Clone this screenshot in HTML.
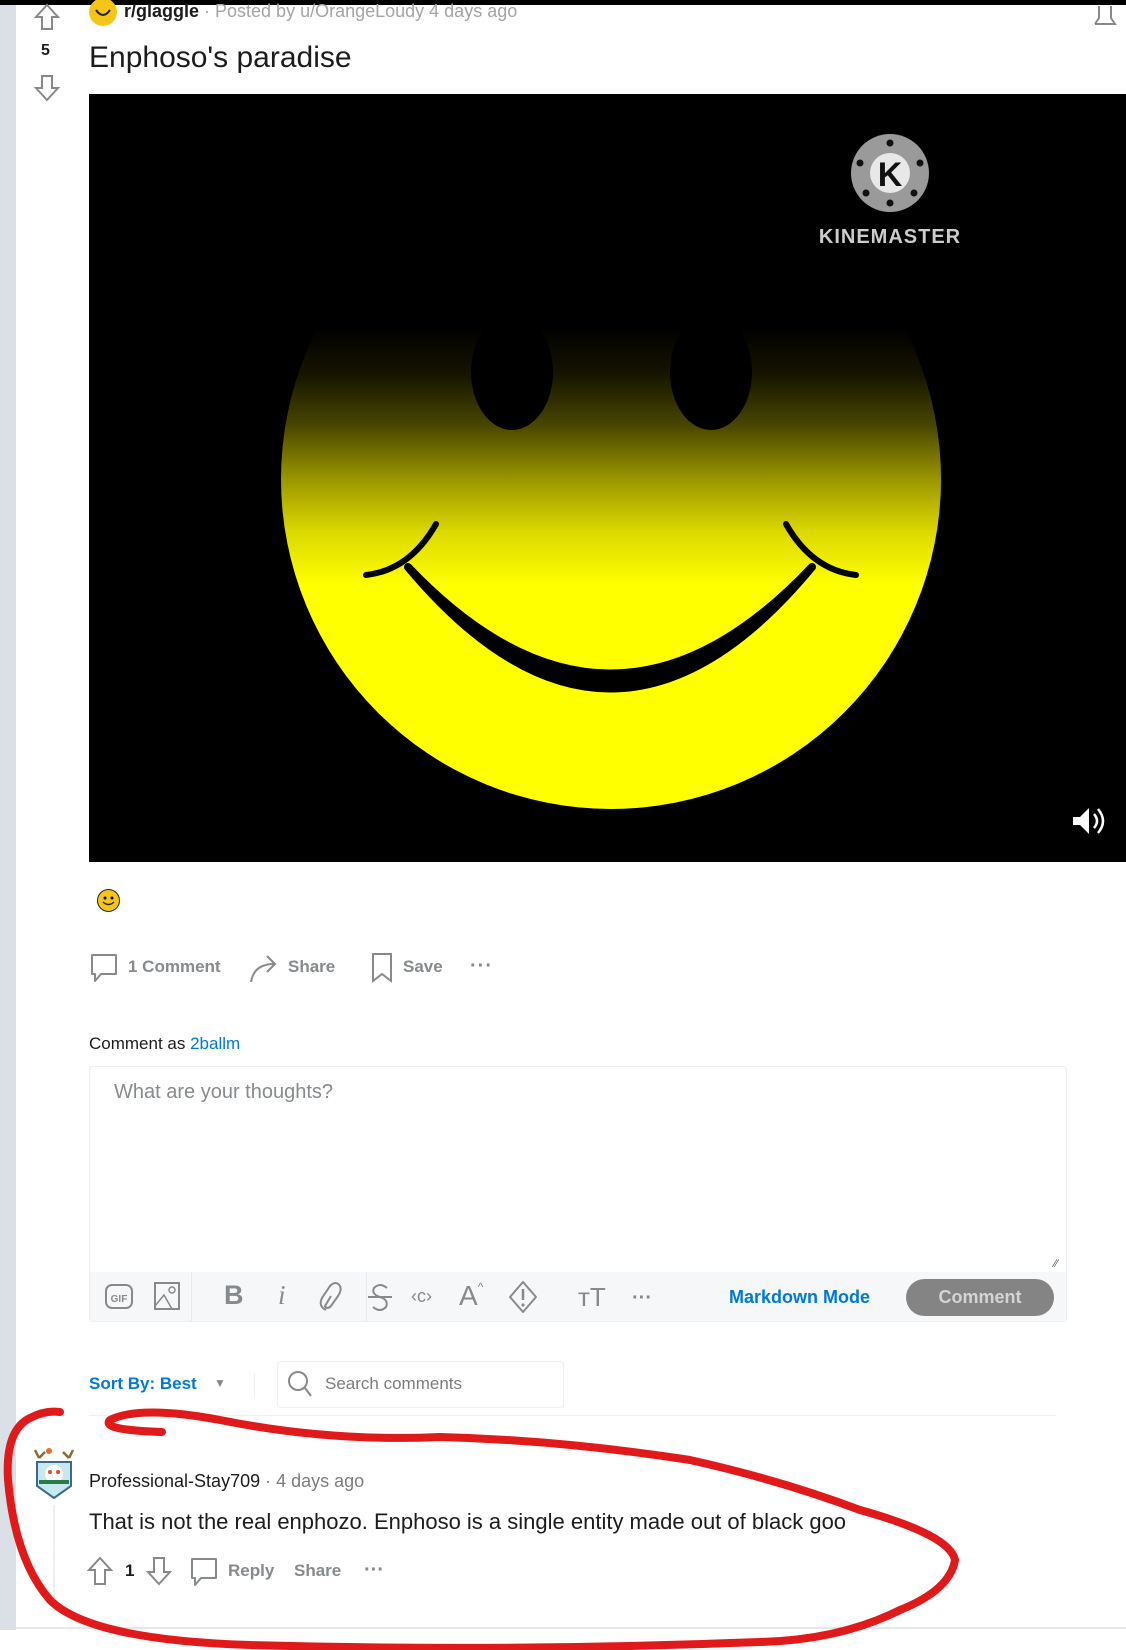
<!DOCTYPE html>
<html><head><meta charset="utf-8"><style>
*{margin:0;padding:0;box-sizing:border-box}
body{width:1126px;height:1650px;position:relative;background:#fff;font-family:"Liberation Sans",sans-serif;overflow:hidden}
.a{position:absolute;white-space:nowrap}
.g{color:#878a8c;font-weight:bold;font-size:17px}
</style></head><body>
<div class="a" style="left:0;top:0;width:1126px;height:5px;background:#000"></div>
<div class="a" style="left:0;top:5px;width:16px;height:1625px;background:#dae0e6"></div>
<div class="a" style="left:16px;top:1627px;width:1110px;height:2px;background:#e5e7ea"></div>

<svg class="a" style="left:32px;top:2px" width="30" height="30" viewBox="0 0 30 30"><path d="M15 3 L26 15 H20 V27 H10 V15 H4 Z" fill="none" stroke="#878a8c" stroke-width="2"/></svg>
<div class="a" style="left:41px;top:42px;font-size:16px;font-weight:bold;color:#1c1c1c">5</div>
<svg class="a" style="left:32px;top:73px" width="30" height="30" viewBox="0 0 30 30"><path d="M15 27 L26 15 H20 V3 H10 V15 H4 Z" fill="none" stroke="#878a8c" stroke-width="2"/></svg>

<div class="a" style="left:89px;top:-2px;width:28px;height:28px;border-radius:50%;background:#f5c518"></div>
<svg class="a" style="left:89px;top:-2px" width="28" height="28"><path d="M7 12 Q14 22 21 12" stroke="#222" stroke-width="2" fill="none"/></svg>
<div class="a" style="left:124px;top:1px;font-size:18px"><b style="color:#1c1c1c">r/glaggle</b><span style="color:#a5a4a4"> · Posted by u/OrangeLoudy 4 days ago</span></div>
<svg class="a" style="left:1090px;top:0" width="30" height="28"><path d="M5 24 H25 L21 18 V6 M9 6 V18 L5 24" fill="none" stroke="#878a8c" stroke-width="2"/></svg>
<div class="a" style="left:89px;top:41px;font-size:30px;color:#1c1c1c">Enphoso's paradise</div>

<svg class="a" style="left:89px;top:94px" width="1037" height="768" viewBox="89 94 1037 768">
<defs><linearGradient id="yg" x1="0" y1="0" x2="0" y2="1" gradientUnits="objectBoundingBox">
<stop offset="0.27" stop-color="#000"/><stop offset="0.34" stop-color="#151400"/><stop offset="0.42" stop-color="#4a4700"/><stop offset="0.50" stop-color="#9a9600"/><stop offset="0.58" stop-color="#dcd800"/><stop offset="0.66" stop-color="#ffff00"/><stop offset="1" stop-color="#ffff00"/></linearGradient>
<clipPath id="cc"><rect x="89" y="330" width="1037" height="600"/></clipPath></defs>
<rect x="89" y="94" width="1037" height="768" fill="#000"/>
<circle cx="611" cy="479" r="330" fill="url(#yg)" clip-path="url(#cc)"/>
<ellipse cx="512" cy="372" rx="41" ry="58" fill="#000"/>
<ellipse cx="711" cy="372" rx="41" ry="58" fill="#000"/>
<path d="M408 567 Q611 810 812 567 Q611 780 408 567 Z" fill="#000" stroke="#000" stroke-width="8" stroke-linejoin="round"/>
<path d="M366 575 Q410 570 436 524 M856 575 Q812 570 786 524" stroke="#000" stroke-width="6" fill="none" stroke-linecap="round"/>
<circle cx="890" cy="173" r="39" fill="#9a9a9a"/>
<circle cx="890" cy="173" r="20" fill="#e8e8e8"/>
<text x="890" y="186" text-anchor="middle" font-family="Liberation Sans" font-weight="bold" font-size="34" fill="#111">K</text>
<g fill="#111"><circle cx="890" cy="143" r="3.5"/><circle cx="890" cy="203" r="3.5"/><circle cx="860" cy="163" r="3.5"/><circle cx="920" cy="163" r="3.5"/><circle cx="866" cy="193" r="3.5"/><circle cx="914" cy="193" r="3.5"/></g>
<text x="890" y="243" text-anchor="middle" font-family="Liberation Sans" font-weight="bold" font-size="20" fill="#ccc" letter-spacing="1">KINEMASTER</text>
<path d="M1073 817 h7 l9 -9 v26 l-9 -9 h-7 Z" fill="#fff"/>
<path d="M1094 814 q6 7 0 14 M1098 809 q10 12 0 24" stroke="#fff" stroke-width="2.5" fill="none"/>
</svg>

<div class="a" style="left:97px;top:889px;width:23px;height:23px;border-radius:50%;background:#f5c518;border:1.5px solid #222"></div>
<svg class="a" style="left:97px;top:889px" width="23" height="23"><circle cx="8" cy="9" r="1.5"/><circle cx="15" cy="9" r="1.5"/><path d="M6 13 Q11.5 18 17 13" stroke="#222" stroke-width="1.5" fill="none"/></svg>

<svg class="a" style="left:89px;top:952px" width="30" height="32"><path d="M3 3 H27 V22 H12 L6 29 V22 H3 Z" fill="none" stroke="#878a8c" stroke-width="2" stroke-linejoin="round"/></svg>
<div class="a g" style="left:128px;top:957px">1 Comment</div>
<svg class="a" style="left:248px;top:952px" width="32" height="32"><path d="M3 30 Q6 12 26 12 M19 4 L27 12 L19 20" fill="none" stroke="#878a8c" stroke-width="2"/></svg>
<div class="a g" style="left:288px;top:957px">Share</div>
<svg class="a" style="left:370px;top:952px" width="24" height="32"><path d="M3 2 H21 V29 L12 22 L3 29 Z" fill="none" stroke="#878a8c" stroke-width="2"/></svg>
<div class="a g" style="left:403px;top:957px">Save</div>
<div class="a g" style="left:470px;top:955px;font-size:20px;letter-spacing:1px">···</div>

<div class="a" style="left:89px;top:1034px;font-size:17px;color:#1c1c1c">Comment as <span style="color:#0079d3">2ballm</span></div>

<div class="a" style="left:89px;top:1066px;width:978px;height:256px;border:1px solid #edeff1;border-radius:4px"></div>
<div class="a" style="left:114px;top:1081px;font-size:20px;color:#878a8c">What are your thoughts?</div>
<div class="a" style="left:1054px;top:1258px;font-size:11px;color:#555">⁄⁄</div>
<div class="a" style="left:90px;top:1272px;width:976px;height:49px;background:#f6f7f8"></div>
<div class="a" style="left:191px;top:1272px;width:1px;height:49px;background:#e5e7ea"></div>
<div class="a" style="left:366px;top:1272px;width:1px;height:49px;background:#e5e7ea"></div>
<svg class="a" style="left:104px;top:1282px" width="30" height="30"><rect x="2" y="3" width="26" height="23" rx="6" fill="none" stroke="#878a8c" stroke-width="2"/><text x="15" y="20" text-anchor="middle" font-family="Liberation Sans" font-size="10" font-weight="bold" fill="#878a8c">GIF</text></svg>
<svg class="a" style="left:152px;top:1280px" width="30" height="32"><rect x="3" y="3" width="24" height="26" fill="none" stroke="#878a8c" stroke-width="2"/><circle cx="20" cy="10" r="3" fill="none" stroke="#878a8c" stroke-width="1.5"/><path d="M3 26 L12 15 L20 29" fill="none" stroke="#878a8c" stroke-width="1.5"/></svg>
<div class="a" style="left:224px;top:1280px;font-size:27px;font-weight:bold;color:#878a8c">B</div>
<div class="a" style="left:278px;top:1280px;font-size:27px;font-style:italic;font-family:'Liberation Serif',serif;color:#878a8c">i</div>
<svg class="a" style="left:316px;top:1280px" width="28" height="34"><path d="M10 30 Q2 26 6 18 L14 6 Q20 0 24 6 Q26 10 22 16 L15 26 Q11 30 9 26 L15 16" fill="none" stroke="#878a8c" stroke-width="2"/></svg>
<svg class="a" style="left:365px;top:1280px" width="30" height="34"><path d="M3 17 H27 M22 8 Q15 2 9 8 Q6 14 15 17 Q24 20 21 27 Q15 33 8 27" fill="none" stroke="#878a8c" stroke-width="2"/></svg>
<div class="a" style="left:411px;top:1286px;font-size:18px;color:#878a8c">‹c›</div>
<div class="a" style="left:459px;top:1280px;font-size:28px;color:#878a8c">A<span style="font-size:12px;vertical-align:top">^</span></div>
<svg class="a" style="left:507px;top:1280px" width="32" height="34"><path d="M16 2 L29 17 L16 32 L3 17 Z" fill="none" stroke="#878a8c" stroke-width="2" stroke-linejoin="round"/><path d="M16 9 V20" stroke="#878a8c" stroke-width="2.5"/><circle cx="16" cy="25" r="1.6" fill="#878a8c"/></svg>
<div class="a" style="left:578px;top:1282px;font-size:26px;color:#878a8c">ᴛT</div>
<div class="a" style="left:632px;top:1287px;font-size:20px;font-weight:bold;color:#878a8c">···</div>
<div class="a" style="left:729px;top:1287px;font-size:18px;font-weight:bold;color:#0079d3">Markdown Mode</div>
<div class="a" style="left:906px;top:1279px;width:148px;height:37px;border-radius:19px;background:#848484;color:#d4d4d4;font-weight:bold;font-size:18px;text-align:center;line-height:37px">Comment</div>

<div class="a" style="left:89px;top:1374px;font-size:17px;font-weight:bold;color:#0079d3">Sort By: Best</div>
<div class="a" style="left:214px;top:1376px;font-size:12px;color:#878a8c">▼</div>
<div class="a" style="left:254px;top:1373px;width:1px;height:24px;background:#edeff1"></div>
<div class="a" style="left:277px;top:1361px;width:287px;height:47px;border:1px solid #edeff1;border-radius:4px"></div>
<svg class="a" style="left:286px;top:1369px" width="28" height="30"><circle cx="12" cy="12" r="9" fill="none" stroke="#878a8c" stroke-width="2"/><path d="M19 19 L25 27" stroke="#878a8c" stroke-width="2"/></svg>
<div class="a" style="left:325px;top:1374px;font-size:17px;color:#7c7c7c">Search comments</div>
<div class="a" style="left:89px;top:1415px;width:967px;height:1px;background:#edeff1"></div>

<svg class="a" style="left:31px;top:1446px" width="46" height="56"><path d="M8 12 L4 4 M8 12 L14 6 M38 12 L42 4 M38 12 L32 6" stroke="#8a6a3a" stroke-width="2.5"/><circle cx="18" cy="5" r="3" fill="#e86a2a"/><path d="M6 16 H40 V40 L23 52 L6 40 Z" fill="#c8e8f0" stroke="#3a6a8a" stroke-width="2"/><circle cx="23" cy="28" r="9" fill="#fff"/><circle cx="19" cy="26" r="2" fill="#e84a2a"/><circle cx="27" cy="26" r="2" fill="#e84a2a"/><path d="M8 36 H38" stroke="#2a7a4a" stroke-width="4"/></svg>
<div class="a" style="left:53px;top:1505px;width:2px;height:104px;background:#edeff1"></div>
<div class="a" style="left:89px;top:1471px;font-size:18px;color:#1c1c1c">Professional-Stay709 <span style="color:#7c7c7c">· 4 days ago</span></div>
<div class="a" style="left:89px;top:1509px;font-size:22px;color:#1c1c1c">That is not the real enphozo. Enphoso is a single entity made out of black goo</div>
<svg class="a" style="left:86px;top:1556px" width="28" height="30"><path d="M14 2 L25 14 H19 V28 H9 V14 H3 Z" fill="none" stroke="#878a8c" stroke-width="2"/></svg>
<div class="a" style="left:125px;top:1561px;font-size:17px;font-weight:bold;color:#1c1c1c">1</div>
<svg class="a" style="left:145px;top:1556px" width="28" height="30"><path d="M14 28 L25 16 H19 V2 H9 V16 H3 Z" fill="none" stroke="#878a8c" stroke-width="2"/></svg>
<svg class="a" style="left:189px;top:1556px" width="30" height="32"><path d="M3 3 H27 V22 H12 L6 29 V22 H3 Z" fill="none" stroke="#878a8c" stroke-width="2" stroke-linejoin="round"/></svg>
<div class="a g" style="left:228px;top:1561px">Reply</div>
<div class="a g" style="left:294px;top:1561px">Share</div>
<div class="a g" style="left:364px;top:1559px;font-size:20px">···</div>

<svg class="a" style="left:0;top:0" width="1126" height="1650">
<path d="M162 1432 Q100 1430 110 1420 Q140 1405 220 1420 Q330 1442 440 1437 Q560 1440 690 1460 Q780 1480 860 1510 Q950 1535 955 1560 Q950 1590 900 1610 Q840 1640 760 1642 Q500 1652 250 1645 Q90 1640 50 1600 Q15 1560 8 1480 Q5 1430 30 1418 Q45 1410 60 1412" fill="none" stroke="#e01a1a" stroke-width="8" stroke-linecap="round" stroke-linejoin="round"/>
</svg>
</body></html>
